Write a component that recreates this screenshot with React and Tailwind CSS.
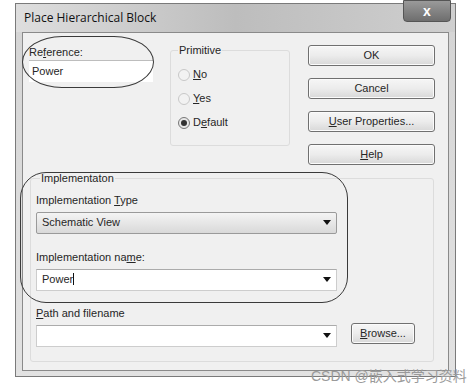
import React from 'react';

const ui = { fontFamily: '"Liberation Sans", Arial, sans-serif' };

function Arrow() {
  return (
    <svg width="8" height="5" viewBox="0 0 8 5" className="shrink-0">
      <path d="M0 0 L8 0 L4 5 Z" fill="#111" />
    </svg>
  );
}

function Btn({ children, className = '' }) {
  return (
    <div
      className={`flex h-[21px] items-center justify-center rounded-[3px] border border-[#707070] bg-gradient-to-b from-[#f6f6f6] via-[#ececec] to-[#d8d8d8] text-[11px] text-[#262626] shadow-[inset_0_0_0_1px_#fbfbfb] ${className}`}
    >
      {children}
    </div>
  );
}

function Radio({ label, checked }) {
  return (
    <div className="flex h-[24px] items-center gap-[3px]">
      <span
        className={`flex h-[12px] w-[12px] items-center justify-center rounded-full border ${
          checked ? 'border-[#777] bg-[#e8e8e8]' : 'border-[#c8c8c8] bg-[#f2f2f2]'
        }`}
      >
        {checked && <span className="h-[6px] w-[6px] rounded-full bg-[#333]" />}
      </span>
      <span className="text-[11px] text-[#262626]">{label}</span>
    </div>
  );
}

function Combo({ children, gray }) {
  return (
    <div
      className={`flex h-[22px] w-[301px] items-center justify-between pl-[5px] pr-[5px] ${
        gray
          ? 'rounded-[2px] border border-[#9a9a9a] bg-gradient-to-b from-[#f4f4f4] to-[#d9d9d9]'
          : 'border border-[#cdcdcd] border-t-[#ababab] bg-white'
      }`}
    >
      <span className="text-[11px] text-[#262626]">{children}</span>
      <Arrow />
    </div>
  );
}

export default function App() {
  return (
    <div className="relative h-[387px] w-[474px] overflow-hidden bg-white pl-[15px] pt-[3px]" style={ui}>
      {/* dialog window */}
      <div className="flex h-[374px] w-[441px] flex-col border border-[#7a7a7a] bg-gradient-to-b from-[#d4d4d4] to-[#e2e2e2] px-[6px] pb-[5px]">
        {/* title bar */}
        <div className="relative -mx-[6px] flex h-[28px] items-center bg-gradient-to-r from-[#dedede] via-[#bdbdbd] to-[#cfcfcf] px-[8px]">
          <span className="text-[12px] text-[#111]" style={{ fontFamily: '"Open Sans", "Noto Sans", sans-serif' }}>
            Place Hierarchical Block
          </span>
          <div className="absolute -top-[4px] right-[4px] flex h-[22px] w-[48px] items-center justify-center rounded-b-[4px] border border-[#555] bg-gradient-to-b from-[#9a9a9a] to-[#6e6e6e]">
            <span className="text-[14px] font-bold leading-none text-white">x</span>
          </div>
        </div>

        {/* body */}
        <div className="flex-1 border border-[#8a8a8a] bg-[#f0f0f0]">
          <div className="flex">
            {/* reference */}
            <div className="ml-[6px] mt-[12px] w-[124px]">
              <div className="h-[14px] text-[11px] leading-[14px] text-[#262626]">
                Re<u>f</u>erence:
              </div>
              <div className="mt-[1px] flex h-[22px] items-center border-t border-[#bdbdbd] bg-white pl-[3px] text-[11px] text-[#262626]">
                Power
              </div>
            </div>

            {/* primitive */}
            <fieldset className="ml-[17px] mt-[9px] h-[104px] w-[120px] rounded-[3px] border border-[#dcdcdc] pl-[7px]">
              <legend className="px-[1px] text-[11px] text-[#262626]">Primitive</legend>
              <div className="mt-[4px]">
                <Radio label={<><u>N</u>o</>} />
                <Radio label={<><u>Y</u>es</>} />
                <Radio label={<>D<u>e</u>fault</>} checked />
              </div>
            </fieldset>

            {/* buttons */}
            <div className="ml-[18px] mt-[12px] flex w-[127px] flex-col gap-[12px]">
              <Btn>OK</Btn>
              <Btn>Cancel</Btn>
              <Btn><span><u>U</u>ser Properties...</span></Btn>
              <Btn><span><u>H</u>elp</span></Btn>
            </div>
          </div>

          {/* implementation */}
          <fieldset className="ml-[7px] mt-[5px] h-[192px] w-[404px] rounded-[3px] border border-[#dcdcdc] pl-[5px]">
            <legend className="ml-[4px] px-[1px] text-[11px] text-[#262626]">Implementaton</legend>
            <div className="mt-[6px] h-[14px] text-[11px] leading-[14px] text-[#262626]">
              Implementation <u>T</u>ype
            </div>
            <div className="mt-[5px]">
              <Combo gray>Schematic View</Combo>
            </div>
            <div className="mt-[16px] h-[14px] text-[11px] leading-[14px] text-[#262626]">
              Implementation na<u>m</u>e:
            </div>
            <div className="mt-[5px]">
              <Combo>
                Powe<span className="border-r border-[#111]">r</span>
              </Combo>
            </div>
            <div className="mt-[15px] h-[14px] text-[11px] leading-[14px] text-[#262626]">
              <u>P</u>ath and filename
            </div>
            <div className="mt-[5px] flex items-start gap-[14px]">
              <Combo />
              <Btn className="-mt-[2px] w-[64px]"><span><u>B</u>rowse...</span></Btn>
            </div>
          </fieldset>
        </div>
      </div>

      {/* hand-drawn annotations */}
      <div className="pointer-events-none absolute left-[22px] top-[36px] h-[52px] w-[132px] rounded-[40px/26px] border-[1.5px] border-[#3a3a3a]" />
      <div className="pointer-events-none absolute left-[20px] top-[172px] h-[131px] w-[328px] rounded-[26px] border-[1.5px] border-[#3a3a3a]" />

      {/* watermark */}
      <div
        className="pointer-events-none absolute left-[311px] top-[366px] text-[14px] text-[#9a9a9a]"
        style={{ fontFamily: '"Liberation Sans", "Noto Sans CJK SC", sans-serif' }}
      >
        CSDN @嵌入式学习资料
      </div>
    </div>
  );
}
